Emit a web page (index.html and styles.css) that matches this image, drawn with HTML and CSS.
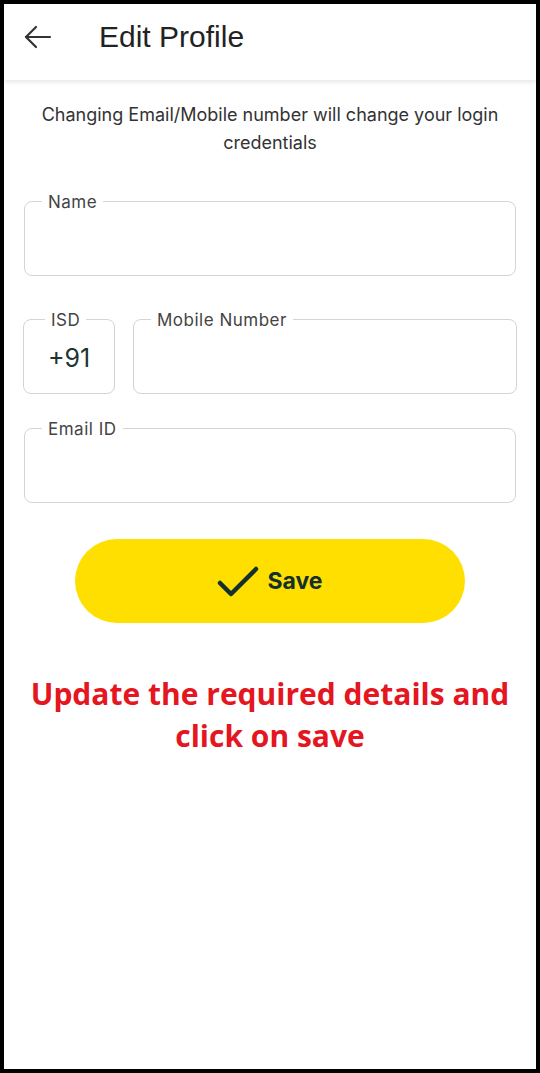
FILE: index.html
```html
<!DOCTYPE html>
<html lang="en">
<head>
    <meta charset="UTF-8">
    <meta name="viewport" content="width=device-width, initial-scale=1.0">
    <title>Edit Profile</title>
    <link rel="stylesheet" href="styles.css">
</head>
<body>
    <div class="frame">
        <header class="top-bar">
            <button class="back-button" aria-label="Back">
                <svg width="28" height="24" viewBox="0 0 28 24" fill="none" stroke="#333" stroke-width="2.2" stroke-linecap="round" stroke-linejoin="round">
                    <path d="M26 12H2"/>
                    <path d="M12 2L2 12l10 10"/>
                </svg>
            </button>
            <h1>Edit Profile</h1>
        </header>

        <main class="content">
            <p class="note">Changing Email/Mobile number will change your login credentials</p>

            <div class="field">
                <label>Name</label>
            </div>

            <div class="phone-row">
                <div class="field isd">
                    <label>ISD</label>
                    <span class="isd-value">+91</span>
                </div>
                <div class="field mobile">
                    <label>Mobile Number</label>
                </div>
            </div>

            <div class="field email">
                <label>Email ID</label>
            </div>

            <button class="save-button">
                <svg width="42" height="32" viewBox="0 0 42 32" fill="none" stroke="#13302c" stroke-width="4.5" stroke-linecap="round" stroke-linejoin="round">
                    <path d="M3 17l11 11L39 3"/>
                </svg>
                <span>Save</span>
            </button>

            <p class="hint">Update the required details and click on save</p>
        </main>
    </div>
</body>
</html>
```

FILE: styles.css
```css
body {
    margin: 0;
    background-color: #000;
    font-family: Inter, "Liberation Sans", sans-serif;
}

.frame {
    box-sizing: border-box;
    width: 540px;
    height: 1073px;
    border: 4px solid #000;
    background-color: #fff;
}

.top-bar {
    height: 76px;
    display: flex;
    align-items: center;
    padding-left: 19px;
    background-color: #fff;
    box-shadow: 0 2px 5px rgba(0, 0, 0, 0.1);
}

.back-button {
    border: none;
    background: none;
    padding: 0;
    width: 30px;
    height: 30px;
    display: flex;
    align-items: center;
    justify-content: center;
    margin-top: -10px;
}

.top-bar h1 {
    margin: -10px 0 0 46px;
    font-family: "Liberation Sans", Arial, sans-serif;
    font-weight: normal;
    font-size: 30px;
    color: #222;
}

.content {
    padding: 21px 20px 0;
    display: flex;
    flex-direction: column;
}

.note {
    margin: 0 0 44px;
    text-align: center;
    font-size: 18px;
    line-height: 28px;
    color: #333;
}

.field {
    position: relative;
    box-sizing: border-box;
    height: 75px;
    border: 1.5px solid #d4d4d4;
    border-radius: 8px;
}

.field label {
    position: absolute;
    top: -10px;
    left: 17px;
    padding: 0 6px;
    background-color: #fff;
    font-size: 17px;
    letter-spacing: 0.5px;
    line-height: 20px;
    color: #444;
}

.phone-row {
    display: flex;
    gap: 18px;
    margin: 43px 0 34px;
    margin-left: -1px;
}

.field.isd {
    width: 92px;
    display: flex;
    align-items: center;
    justify-content: center;
}

.field.isd label {
    left: 21px;
}

.isd-value {
    font-size: 25px;
    color: #1c3633;
    margin-top: 2px;
}

.field.mobile {
    flex: 1;
    margin-right: -1px;
}

.save-button {
    align-self: center;
    width: 390px;
    height: 84px;
    margin-top: 36px;
    border: none;
    border-radius: 42px;
    background-color: #fedf00;
    display: flex;
    align-items: center;
    justify-content: center;
    gap: 8px;
    font-family: inherit;
    font-weight: bold;
    font-size: 23px;
    color: #13302c;
}

.save-button svg {
    margin-top: 2px;
}

.hint {
    margin: 50px 0 0;
    text-align: center;
    font-family: "Open Sans", sans-serif;
    font-weight: 700;
    font-size: 30px;
    line-height: 42px;
    color: #e4161f;
}
```
